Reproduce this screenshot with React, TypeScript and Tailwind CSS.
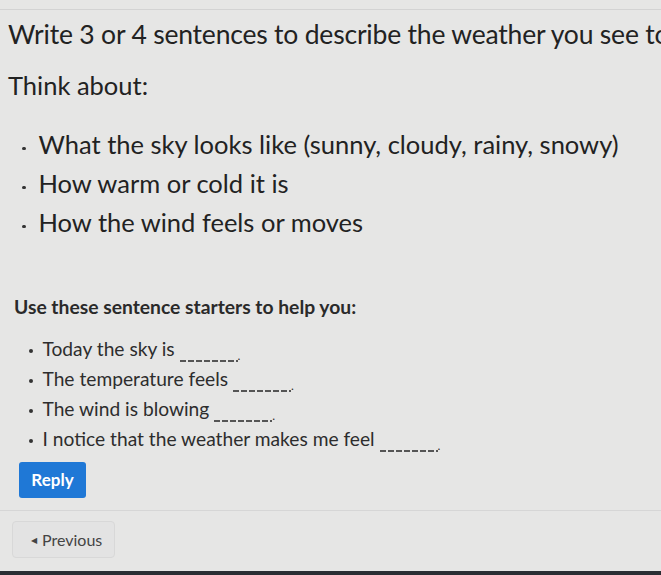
import type { ReactNode } from 'react'

const thinkItems = [
  'What the sky looks like (sunny, cloudy, rainy, snowy)',
  'How warm or cold it is',
  'How the wind feels or moves',
]

const starters = [
  'Today the sky is',
  'The temperature feels',
  'The wind is blowing',
  'I notice that the weather makes me feel',
]

function Dot({ className }: { className?: string }) {
  return <span className={`inline-block h-[3.5px] w-[3.5px] shrink-0 rounded-full bg-[#333] ${className ?? ''}`} />
}

function BulletRow({ children, big }: { children: ReactNode; big?: boolean }) {
  return (
    <li className={big ? 'flex h-[39px] items-center gap-[13px]' : 'flex h-[30px] items-center gap-[10px]'}>
      <Dot className={big ? 'mt-[8px]' : 'mt-[4px]'} />
      <span className="whitespace-nowrap">{children}</span>
    </li>
  )
}

export default function App() {
  return (
    <div
      className="flex h-[575px] w-[661px] flex-col overflow-hidden bg-[#e6e6e5] text-[#222]"
      style={{ fontFamily: 'Lato, "Open Sans", sans-serif' }}
    >
      <div className="mt-[9px] border-t border-[#d3d3d3]" />
      <h1 className="whitespace-nowrap pl-[8px] pt-[9px] text-[26.5px] leading-[30px] tracking-[-0.2px]">
        Write 3 or 4 sentences to describe the weather you see today.
      </h1>
      <p className="pl-[8px] pt-[21px] text-[25.5px] leading-[30px]">Think about:</p>
      <ul className="pl-[22px] pt-[25px] text-[25.5px]">
        {thinkItems.map((item) => (
          <BulletRow key={item} big>
            {item}
          </BulletRow>
        ))}
      </ul>
      <p className="pl-[14px] pt-[53px] text-[19.3px] font-bold leading-[24px] text-[#2a2a2a]">
        Use these sentence starters to help you:
      </p>
      <ul className="pl-[29px] pt-[15px] text-[19.2px] text-[#2d2d2d]">
        {starters.map((s) => (
          <BulletRow key={s}>
            {s}{' '}
            <span className="relative top-[6px] inline-block h-[1.5px] w-[58px] bg-[repeating-linear-gradient(90deg,#555_0_6px,transparent_6px_8px)]" />
            <span className="relative top-[4px] text-[12px]">.</span>
          </BulletRow>
        ))}
      </ul>
      <div className="pl-[19px] pt-[8px]">
        <button className="h-[36px] w-[67px] rounded-[3px] bg-[#1f78d6] text-[17px] font-bold text-white">
          Reply
        </button>
      </div>
      <div className="mt-[12px] border-t border-[#d6d6d6]" />
      <div className="pl-[12px] pt-[10px]">
        <button className="flex h-[37px] w-[103px] items-center gap-[5px] rounded-[4px] border border-[#d8d8d8] bg-[#e3e3e3] pl-[18px] text-[16px] text-[#444]">
          <span className="text-[8px]">◀</span>
          Previous
        </button>
      </div>
      <div className="mt-auto h-[4px] bg-[#2a2d33]" />
    </div>
  )
}
